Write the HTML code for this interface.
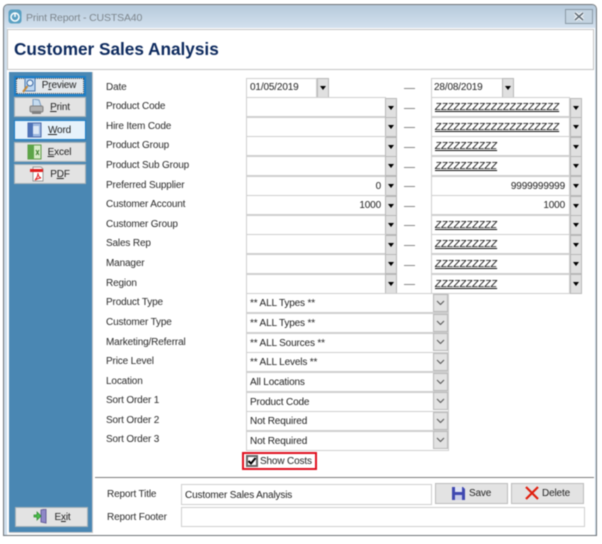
<!DOCTYPE html>
<html><head><meta charset="utf-8"><style>
html,body{margin:0;padding:0;background:#fff}
body{width:602px;height:544px;position:relative;overflow:hidden;font-family:"Liberation Sans",sans-serif;font-size:10px;letter-spacing:-.15px;color:#333}
#w{position:absolute;left:0;top:0;width:602px;height:544px;filter:blur(.4px)}
#w div,#w svg{position:absolute}
.l{left:106px;height:14px;line-height:14px;margin-top:2px;white-space:nowrap;color:#2a2a2a}
.i{background:#fff;border:1px solid #cfcfcf;box-sizing:border-box;height:20px;line-height:19px;padding:0 3px;white-space:nowrap;color:#222}
.k{line-height:20px}
.r{text-align:right;padding-right:4px}
.z{font-style:italic;letter-spacing:.1px;text-decoration:underline;font-weight:400;color:#111;padding-left:3px}
.b{width:12px;height:20px;box-sizing:border-box;background:#e0e0e0;border:1px solid #b8b8b8}
.b:after{content:"";position:absolute;left:2px;top:7px;border:3px solid transparent;border-top:4px solid #000;border-bottom:0}
.d{width:11px;height:1px;background:#8a8a8a;left:404px}
.c{left:433px;width:15px;height:18px;box-sizing:border-box;background:#e2e2e2;border:1px solid #b8b8b8}
.nb{left:14px;width:72px;height:20px;box-sizing:border-box;background:#e3e3e3;border:1px solid #a9b3b8;text-align:center;line-height:19px;font-size:10px;color:#222}
u{text-decoration:underline}
</style></head><body><div id="w">
<div style="left:3px;top:4px;width:594px;height:532px;box-sizing:border-box;border:1px solid #6f7478;border-radius:5px 5px 0 0;background:#d0dfec"></div>
<div style="left:4px;top:5px;width:592px;height:23px;border-radius:4px 4px 0 0;background:linear-gradient(#b6cadb,#d3e1ee)"></div>
<div style="left:7px;top:28px;width:588px;height:507px;background:#fff"></div>
<svg style="left:8px;top:9px" width="14" height="15" viewBox="0 0 14 15"><rect x=".5" y=".5" width="13" height="14" rx="3" fill="#5aa0c2"/><circle cx="7" cy="8" r="4" fill="none" stroke="#fff" stroke-width="1.5"/><path d="M7 3.500V8" stroke="#fff" stroke-width="1.500"/></svg>
<div style="left:26px;top:11px;font-size:10.5px;color:#7d868d;line-height:14px;white-space:nowrap">Print Report - CUSTSA40</div>
<div style="left:565px;top:9px;width:28px;height:15px;box-sizing:border-box;border:1px solid #8b9aa6;background:#c3d3e0"></div>
<svg style="left:573px;top:12px" width="12" height="9" viewBox="0 0 12 9"><path d="M2 1l8 7M10 1L2 8" stroke="#fff" stroke-width="3.500"/><path d="M2 1l8 7M10 1L2 8" stroke="#5f6b75" stroke-width="1.500"/></svg>
<div style="left:7px;top:29px;width:587px;height:41px;box-sizing:border-box;background:#fff;border:1px solid #c4c4c4"></div>
<div style="left:14px;top:38px;font-size:17.2px;letter-spacing:0;font-weight:700;color:#0d2a5e;line-height:22px;white-space:nowrap">Customer Sales Analysis</div>
<div style="left:9px;top:72px;width:83px;height:460px;background:#4a87b3;border-right:1px solid #c8c8c8;border-bottom:1px solid #c8c8c8"></div>
<div style="left:95px;top:477px;width:499px;height:1px;background:#7d7d7d"></div>

<div class="nb" style="top:76px;left:14px;width:72px;height:20px;background:#dfeaf4;border:2px solid #1d7fc8"></div>
<div style="left:16px;top:78px;width:68px;height:16px;box-sizing:border-box;border:1px dotted #444;background:#e3e8ec;line-height:14px;text-align:center;padding-left:18px;color:#222">P<u>r</u>eview</div>
<svg style="left:22px;top:78px" width="14" height="15" viewBox="0 0 14 15"><rect x="3" y="0" width="10" height="13" fill="#bcd6f0" stroke="#4a7ab0"/><circle cx="8" cy="5" r="3" fill="#e8f3fb" stroke="#3a66a0"/><path d="M5.500 8L1 14" stroke="#c58a3a" stroke-width="2"/></svg>
<div class="nb" style="top:97px;padding-left:20px"><u>P</u>rint</div>
<svg style="left:29px;top:99px" width="15" height="16" viewBox="0 0 15 16"><path d="M4 0l6 1 2 6H4z" fill="#c6dcf0" stroke="#7a9cc0"/><rect x="1" y="7" width="13" height="6" rx="1.500" fill="#b0b0b0" stroke="#808080"/><rect x="3" y="12" width="9" height="3" fill="#808080"/></svg>
<div class="nb" style="top:120px;background:#e6f2fb;border:1px solid #1d7fc8;padding-left:19px"><u>W</u>ord</div>
<svg style="left:27px;top:122px" width="15" height="16" viewBox="0 0 15 16"><rect x="1" y="1" width="13" height="14" fill="#9db8e0" stroke="#4a69a8"/><rect x="6" y="4" width="6" height="8" fill="#dde8f6"/><rect x="1" y="1" width="5" height="14" fill="#4e73b8"/></svg>
<div class="nb" style="top:142px;padding-left:19px"><u>E</u>xcel</div>
<svg style="left:27px;top:144px" width="15" height="16" viewBox="0 0 15 16"><rect x="1" y="1" width="13" height="14" fill="#d8ecc8" stroke="#5f9a48"/><rect x="1" y="1" width="6" height="14" fill="#5da548"/><path d="M9 6l3 5M12 6l-3 5" stroke="#3a7a2a"/></svg>
<div class="nb" style="top:164px;padding-left:20px">P<u>D</u>F</div>
<svg style="left:30px;top:166px" width="15" height="16" viewBox="0 0 15 16"><path d="M3 1h8l2 2v12H3z" fill="#fff" stroke="#999"/><rect x="0" y="3" width="13" height="3" fill="#e02020"/><path d="M5 14c2-2 3-5 3-7 0 3 1 4 3 5-2 0-4 1-6 2z" fill="none" stroke="#e02020"/></svg>
<div class="nb" style="left:15px;top:507px;width:73px;padding-left:22px;background:#e3e3e3">E<u>x</u>it</div>
<svg style="left:33px;top:509px" width="15" height="15" viewBox="0 0 15 15"><path d="M8 1l5-1v14l-5-1z" fill="#8f88c8" stroke="#66609a"/><path d="M1 6h3V3l4 4-4 4V8H1z" fill="#4cc04c" stroke="#2a8a2a" stroke-width=".7"/></svg>

<div class="l" style="top:79px">Date</div>
<div class="l" style="top:98px">Product Code</div>
<div class="l" style="top:118px">Hire Item Code</div>
<div class="l" style="top:137px">Product Group</div>
<div class="l" style="top:157px">Product Sub Group</div>
<div class="l" style="top:177px">Preferred Supplier</div>
<div class="l" style="top:196px">Customer Account</div>
<div class="l" style="top:216px">Customer Group</div>
<div class="l" style="top:235px">Sales Rep</div>
<div class="l" style="top:255px">Manager</div>
<div class="l" style="top:275px">Region</div>
<div class="l" style="top:294px">Product Type</div>
<div class="l" style="top:314px">Customer Type</div>
<div class="l" style="top:334px">Marketing/Referral</div>
<div class="l" style="top:353px">Price Level</div>
<div class="l" style="top:373px">Location</div>
<div class="l" style="top:392px">Sort Order 1</div>
<div class="l" style="top:412px">Sort Order 2</div>
<div class="l" style="top:431px">Sort Order 3</div>

<div class="i" style="left:246px;top:78px;width:71px;line-height:17px">01/05/2019</div><div class="b" style="left:317px;top:78px"></div><div class="d" style="top:88px"></div><div class="i" style="left:431px;top:78px;width:72px;padding-left:2px;line-height:17px">28/08/2019</div><div class="b" style="left:502px;top:78px"></div>

<div class="i" style="left:246px;top:97px;width:140px"></div><div class="b" style="left:385px;top:98px"></div><div class="d" style="top:108px"></div><div class="i z" style="left:431px;top:97px;width:139px">ZZZZZZZZZZZZZZZZZZZZ</div><div class="b" style="left:570px;top:98px"></div>
<div class="i" style="left:246px;top:117px;width:140px"></div><div class="b" style="left:385px;top:117px"></div><div class="d" style="top:127px"></div><div class="i z" style="left:431px;top:117px;width:139px">ZZZZZZZZZZZZZZZZZZZZ</div><div class="b" style="left:570px;top:117px"></div>
<div class="i" style="left:246px;top:136px;width:140px"></div><div class="b" style="left:385px;top:137px"></div><div class="d" style="top:147px"></div><div class="i z" style="left:431px;top:136px;width:139px">ZZZZZZZZZZ</div><div class="b" style="left:570px;top:137px"></div>
<div class="i" style="left:246px;top:156px;width:140px"></div><div class="b" style="left:385px;top:156px"></div><div class="d" style="top:167px"></div><div class="i z" style="left:431px;top:156px;width:139px">ZZZZZZZZZZ</div><div class="b" style="left:570px;top:156px"></div>
<div class="i r" style="left:246px;top:176px;width:140px">0</div><div class="b" style="left:385px;top:176px"></div><div class="d" style="top:186px"></div><div class="i r" style="left:431px;top:176px;width:139px">9999999999</div><div class="b" style="left:570px;top:176px"></div>
<div class="i r" style="left:246px;top:195px;width:140px">1000</div><div class="b" style="left:385px;top:196px"></div><div class="d" style="top:206px"></div><div class="i r" style="left:431px;top:195px;width:139px">1000</div><div class="b" style="left:570px;top:196px"></div>
<div class="i" style="left:246px;top:215px;width:140px"></div><div class="b" style="left:385px;top:215px"></div><div class="d" style="top:225px"></div><div class="i z" style="left:431px;top:215px;width:139px">ZZZZZZZZZZ</div><div class="b" style="left:570px;top:215px"></div>
<div class="i" style="left:246px;top:234px;width:140px"></div><div class="b" style="left:385px;top:235px"></div><div class="d" style="top:245px"></div><div class="i z" style="left:431px;top:234px;width:139px">ZZZZZZZZZZ</div><div class="b" style="left:570px;top:235px"></div>
<div class="i" style="left:246px;top:254px;width:140px"></div><div class="b" style="left:385px;top:254px"></div><div class="d" style="top:265px"></div><div class="i z" style="left:431px;top:254px;width:139px">ZZZZZZZZZZ</div><div class="b" style="left:570px;top:254px"></div>
<div class="i" style="left:246px;top:274px;width:140px"></div><div class="b" style="left:385px;top:274px"></div><div class="d" style="top:284px"></div><div class="i z" style="left:431px;top:274px;width:139px">ZZZZZZZZZZ</div><div class="b" style="left:570px;top:274px"></div>

<div class="i k" style="left:246px;top:293px;width:203px">** ALL Types **</div><div class="c" style="top:294px"></div>
<div class="i k" style="left:246px;top:313px;width:203px">** ALL Types **</div><div class="c" style="top:314px"></div>
<div class="i" style="left:246px;top:333px;width:203px">** ALL Sources **</div><div class="c" style="top:333px"></div>
<div class="i k" style="left:246px;top:352px;width:203px">** ALL Levels **</div><div class="c" style="top:353px"></div>
<div class="i k" style="left:246px;top:372px;width:203px">All Locations</div><div class="c" style="top:373px"></div>
<div class="i" style="left:246px;top:392px;width:203px">Product Code</div><div class="c" style="top:392px"></div>
<div class="i k" style="left:246px;top:411px;width:203px">Not Required</div><div class="c" style="top:412px"></div>
<div class="i" style="left:246px;top:431px;width:203px">Not Required</div><div class="c" style="top:431px"></div>
<svg style="left:433px;top:294px" width="15" height="156" viewBox="0 0 15 156" fill="none" stroke="#555"><path d="M4 7l3.500 3.500L11 7M4 27l3.500 3.500L11 27M4 46l3.500 3.500L11 46M4 66l3.500 3.500L11 66M4 86l3.500 3.500L11 86M4 105l3.500 3.500L11 105M4 125l3.500 3.500L11 125M4 144l3.500 3.500L11 144"/></svg>

<div style="left:242px;top:452px;width:75px;height:18px;box-sizing:border-box;border:2px solid #e01020;background:#fff"></div>
<div style="left:246px;top:455px;width:12px;height:12px;box-sizing:border-box;border:2px solid #666;background:#fff"></div>
<svg style="left:247px;top:456px" width="10" height="10" viewBox="0 0 10 10"><path d="M1.500 5l2.500 2.500L8.500 2" fill="none" stroke="#000" stroke-width="2"/></svg>
<div style="left:260px;top:455px;line-height:14px;color:#222;white-space:nowrap">Show Costs</div>

<div class="l" style="left:107px;top:486px">Report Title</div>
<div class="l" style="left:107px;top:509px">Report Footer</div>
<div class="i" style="left:181px;top:484px;width:251px;height:21px;line-height:21px">Customer Sales Analysis</div>
<div class="i" style="left:181px;top:507px;width:404px;height:20px"></div>
<div style="left:435px;top:483px;width:73px;height:21px;box-sizing:border-box;background:#e3e3e3;border:1px solid #bcbcbc;line-height:19px;padding-left:33px;color:#222">Save</div>
<svg style="left:452px;top:487px" width="13" height="13" viewBox="0 0 13 13"><path d="M0 0h11l2 2v11H0z" fill="#3f48b0"/><rect x="3" y="0" width="7" height="5" fill="#dfe3f4"/><rect x="3" y="8" width="7" height="5" fill="#c8cce8"/></svg>
<div style="left:511px;top:483px;width:73px;height:21px;box-sizing:border-box;background:#e3e3e3;border:1px solid #bcbcbc;line-height:19px;padding-left:30px;color:#222">Delete</div>
<svg style="left:525px;top:486px" width="14" height="14" viewBox="0 0 14 14"><path d="M1 1l12 12M13 1L1 13" stroke="#e02010" stroke-width="2.200"/></svg>
</div></body></html>
